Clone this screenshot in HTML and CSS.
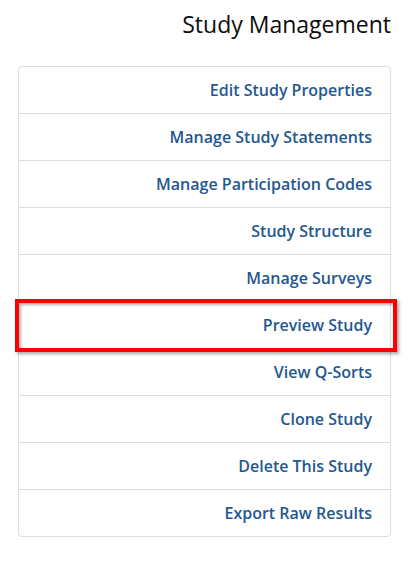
FILE: index.html
```html
<!DOCTYPE html>
<html lang="en">
<head>
<meta charset="utf-8">
<title>Study Management</title>
<link rel="stylesheet" href="styles.css">
</head>
<body>
<div class="panel">
  <h2 class="title">Study Management</h2>
  <div class="menu">
    <a class="item" href="#">Edit Study Properties</a>
    <a class="item" href="#">Manage Study Statements</a>
    <a class="item" href="#">Manage Participation Codes</a>
    <a class="item" href="#">Study Structure</a>
    <a class="item" href="#">Manage Surveys</a>
    <a class="item" href="#">Preview Study</a>
    <a class="item" href="#">View Q-Sorts</a>
    <a class="item" href="#">Clone Study</a>
    <a class="item" href="#">Delete This Study</a>
    <a class="item" href="#">Export Raw Results</a>
    <div class="highlight"></div>
  </div>
</div>
</body>
</html>
```
FILE: styles.css
```css
html, body {
  margin: 0;
  padding: 0;
  background: #ffffff;
}
body {
  font-family: "Open Sans", "DejaVu Sans", sans-serif;
}
.panel {
  width: 373px;
  margin-left: 18px;
}
.title {
  margin: 10px 0 28px 0;
  font-size: 23px;
  line-height: 28px;
  font-weight: 500;
  color: #0d0d0d;
  text-align: right;
}
.menu {
  position: relative;
  display: flex;
  flex-direction: column;
  border: 1px solid #dcdce4;
  border-radius: 4px;
}
.item {
  display: block;
  padding: 11px 18px 11px 16px;
  font-size: 16px;
  line-height: 24px;
  font-weight: 600;
  color: #1f5890;
  text-decoration: none;
  text-align: right;
  border-top: 1px solid #dcdce4;
}
.item:first-child {
  border-top: none;
}
.highlight {
  position: absolute;
  left: -4px;
  top: 232px;
  width: 382px;
  height: 53px;
  box-sizing: border-box;
  border: 4px solid #ff0000;
  box-shadow: 2px 2px 3px rgba(0, 0, 0, 0.35), inset 2px 2px 3px rgba(0, 0, 0, 0.3);
  pointer-events: none;
}
```
